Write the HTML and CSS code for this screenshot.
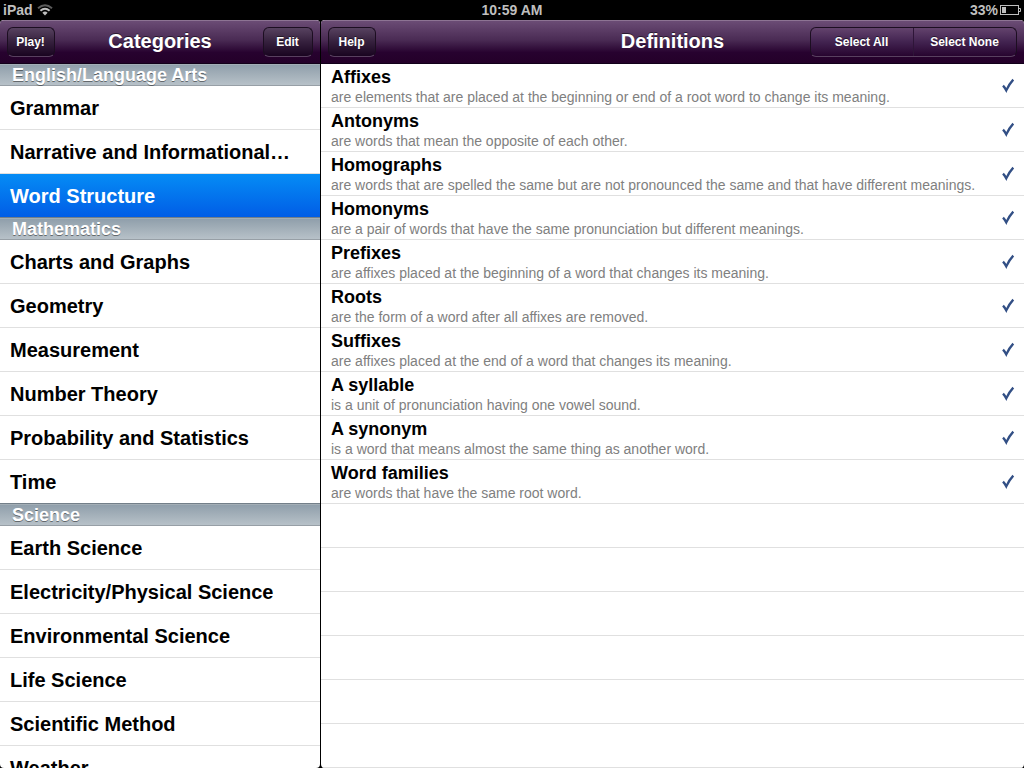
FILE: index.html
```
<!DOCTYPE html>
<html lang="en">
<head>
  <meta charset="UTF-8">
  <meta name="viewport" content="width=device-width, initial-scale=1.0">
  <title>Definitions</title>
  <link rel="stylesheet" href="styles.css">
</head>
<body>
  <svg class="symbols" aria-hidden="true">
    <symbol id="check" viewBox="0 0 14 16">
      <path d="M2 7.6 Q3.8 9.4 5.3 12.4 Q8 6.2 12.3 1.6" fill="none" stroke="#324f85" stroke-width="2.3"/>
    </symbol>
  </svg>

  <div class="status-bar">
    <div class="status-left">
      <span>iPad</span>
      <svg class="wifi" width="16" height="12" viewBox="0 0 16 12" fill="none" stroke-width="2">
        <path d="M1 4.2 Q8 -1.8 15 4.2" stroke="#5c5c5c"/>
        <path d="M3.4 6.8 Q8 2.8 12.6 6.8" stroke="#bfbfbf"/>
        <path d="M5.4 8.8 Q8 6.4 10.6 8.8 L8 11.6 Z" fill="#bfbfbf" stroke="none"/>
      </svg>
    </div>
    <span>10:59 AM</span>
    <div class="status-right">
      <span>33%</span>
      <svg width="21" height="10" viewBox="0 0 21 10">
        <rect x="0.5" y="0.5" width="18" height="9" fill="none" stroke="#bfbfbf"/>
        <rect x="2" y="2" width="4" height="6" fill="#bfbfbf"/>
        <path d="M19 3.5 H20.5 V6.5 H19" fill="none" stroke="#bfbfbf"/>
      </svg>
    </div>
  </div>

  <div class="split">
    <div class="pane categories">
      <div class="navbar">
        <button class="bar-button">Play!</button>
        <h1>Categories</h1>
        <button class="bar-button">Edit</button>
      </div>
      <div class="list">
        <h2>English/Language Arts</h2>
        <a href="#">Grammar</a>
        <a href="#">Narrative and Informational…</a>
        <a href="#" class="selected">Word Structure</a>
        <h2>Mathematics</h2>
        <a href="#">Charts and Graphs</a>
        <a href="#">Geometry</a>
        <a href="#">Measurement</a>
        <a href="#">Number Theory</a>
        <a href="#">Probability and Statistics</a>
        <a href="#">Time</a>
        <h2>Science</h2>
        <a href="#">Earth Science</a>
        <a href="#">Electricity/Physical Science</a>
        <a href="#">Environmental Science</a>
        <a href="#">Life Science</a>
        <a href="#">Scientific Method</a>
        <a href="#">Weather</a>
      </div>
    </div>

    <div class="pane definitions">
      <div class="navbar">
        <button class="bar-button">Help</button>
        <h1>Definitions</h1>
        <div class="segmented">
          <button>Select All</button>
          <button>Select None</button>
        </div>
      </div>
      <div class="list">
        <label class="row">
          <span class="text"><b>Affixes</b><small>are elements that are placed at the beginning or end of a root word to change its meaning.</small></span>
          <span class="tick"><input type="checkbox" checked><svg><use href="#check"/></svg></span>
        </label>
        <label class="row">
          <span class="text"><b>Antonyms</b><small>are words that mean the opposite of each other.</small></span>
          <span class="tick"><input type="checkbox" checked><svg><use href="#check"/></svg></span>
        </label>
        <label class="row">
          <span class="text"><b>Homographs</b><small>are words that are spelled the same but are not pronounced the same and that have different meanings.</small></span>
          <span class="tick"><input type="checkbox" checked><svg><use href="#check"/></svg></span>
        </label>
        <label class="row">
          <span class="text"><b>Homonyms</b><small>are a pair of words that have the same pronunciation but different meanings.</small></span>
          <span class="tick"><input type="checkbox" checked><svg><use href="#check"/></svg></span>
        </label>
        <label class="row">
          <span class="text"><b>Prefixes</b><small>are affixes placed at the beginning of a word that changes its meaning.</small></span>
          <span class="tick"><input type="checkbox" checked><svg><use href="#check"/></svg></span>
        </label>
        <label class="row">
          <span class="text"><b>Roots</b><small>are the form of a word after all affixes are removed.</small></span>
          <span class="tick"><input type="checkbox" checked><svg><use href="#check"/></svg></span>
        </label>
        <label class="row">
          <span class="text"><b>Suffixes</b><small>are affixes placed at the end of a word that changes its meaning.</small></span>
          <span class="tick"><input type="checkbox" checked><svg><use href="#check"/></svg></span>
        </label>
        <label class="row">
          <span class="text"><b>A syllable</b><small>is a unit of pronunciation having one vowel sound.</small></span>
          <span class="tick"><input type="checkbox" checked><svg><use href="#check"/></svg></span>
        </label>
        <label class="row">
          <span class="text"><b>A synonym</b><small>is a word that means almost the same thing as another word.</small></span>
          <span class="tick"><input type="checkbox" checked><svg><use href="#check"/></svg></span>
        </label>
        <label class="row">
          <span class="text"><b>Word families</b><small>are words that have the same root word.</small></span>
          <span class="tick"><input type="checkbox" checked><svg><use href="#check"/></svg></span>
        </label>
        <div class="row"></div>
        <div class="row"></div>
        <div class="row"></div>
        <div class="row"></div>
        <div class="row"></div>
        <div class="row"></div>
      </div>
    </div>
  </div>
</body>
</html>
```

FILE: styles.css
```
* {
  box-sizing: border-box;
}
body {
  display: flex;
  flex-direction: column;
  height: 100vh;
  margin: 0;
  overflow: hidden;
  background-color: black;
  font-family: "Liberation Sans", Helvetica, Arial, sans-serif;
}
h1, h2 {
  margin: 0;
}
button {
  font-family: inherit;
  cursor: pointer;
}
.symbols {
  display: none;
}

/* Status bar */
.status-bar {
  display: grid;
  grid-template-columns: 1fr auto 1fr;
  align-items: center;
  height: 20px;
  padding: 0 3px;
  color: #bfbfbf;
  font-size: 14px;
  font-weight: bold;
  line-height: 18px;
}
.status-left,
.status-right {
  display: flex;
  align-items: center;
  gap: 4px;
}
.status-right {
  justify-content: flex-end;
  gap: 2px;
}

/* Two panes with a black line between them */
.split {
  display: flex;
  flex: 1;
  gap: 1px;
  min-height: 0;
}
.pane {
  display: flex;
  flex-direction: column;
  overflow: hidden;
  border-radius: 4px;
  background-color: white;
}
.categories {
  flex: 0 0 320px;
}
.definitions {
  flex: 1;
  min-width: 0;
}
.list {
  flex: 1;
  min-height: 0;
  overflow: hidden;
}

/* Navigation bars */
.navbar {
  display: grid;
  grid-template-columns: 1fr auto 1fr;
  align-items: center;
  flex-shrink: 0;
  height: 44px;
  padding: 0 7px;
  border-top: 1px solid #8d7493;
  border-bottom: 1px solid #12001a;
  background: linear-gradient(#6b4c75, #4a2b54 45%, #27022f 75%, #240029);
}
.navbar h1 {
  padding-bottom: 2px;
  color: white;
  font-size: 20px;
  line-height: 24px;
  text-shadow: 0 -1px 0 rgba(0, 0, 0, 0.5);
}
.bar-button,
.segmented {
  height: 30px;
  border: 1px solid #1c0e21;
  border-bottom-color: #58405f;
  border-radius: 6px;
}
.bar-button,
.segmented button {
  padding: 0 9px 0 8px;
  color: white;
  font-size: 12px;
  font-weight: bold;
  text-shadow: 0 -1px 0 rgba(0, 0, 0, 0.5);
}
.bar-button {
  justify-self: start;
  min-width: 48px;
  background: linear-gradient(#574260, #35203d 50%, #190420);
}
.bar-button:last-child {
  min-width: 50px;
  justify-self: end;
}
.segmented {
  display: flex;
  justify-self: end;
  width: 207px;
  overflow: hidden;
  background: linear-gradient(#63436d, #422350 50%, #27042f);
}
.segmented button {
  flex: 1;
  border: 0;
  background: none;
}
.segmented button + button {
  border-left: 1px solid #2e1538;
}

/* Categories */
.categories h2 {
  height: 22px;
  padding-left: 12px;
  border-top: 1px solid #a3aeb6;
  border-bottom: 1px solid #979fa6;
  background: linear-gradient(#909fab, #b7c1c8);
  color: white;
  font-size: 18px;
  line-height: 20px;
  text-shadow: 0 1px 0 rgba(0, 0, 0, 0.45);
}
.categories a {
  display: block;
  height: 44px;
  padding: 0 10px;
  overflow: hidden;
  border-bottom: 1px solid #e0e0e0;
  color: black;
  font-size: 20px;
  font-weight: bold;
  line-height: 44px;
  text-decoration: none;
  text-overflow: ellipsis;
  white-space: nowrap;
}
.categories a:has(+ h2) {
  border-bottom-color: #737f89;
}
.categories .selected {
  background: linear-gradient(#058cf5, #015de6);
  color: white;
}

/* Definitions */
.row {
  display: flex;
  align-items: center;
  height: 44px;
  padding: 0 9px 0 10px;
  border-bottom: 1px solid #e0e0e0;
}
.text {
  display: flex;
  flex: 1;
  flex-direction: column;
  min-width: 0;
}
.text b {
  font-size: 18px;
  line-height: 22px;
}
.text small {
  overflow: hidden;
  color: #808080;
  font-size: 14px;
  line-height: 18px;
  text-overflow: ellipsis;
  white-space: nowrap;
}
.tick {
  display: grid;
  width: 14px;
  height: 16px;
}
.tick input,
.tick svg {
  grid-area: 1 / 1;
  width: 14px;
  height: 16px;
  margin: 0;
}
.tick input {
  appearance: none;
}
.tick svg {
  pointer-events: none;
}
.tick input:not(:checked) + svg {
  visibility: hidden;
}
```
